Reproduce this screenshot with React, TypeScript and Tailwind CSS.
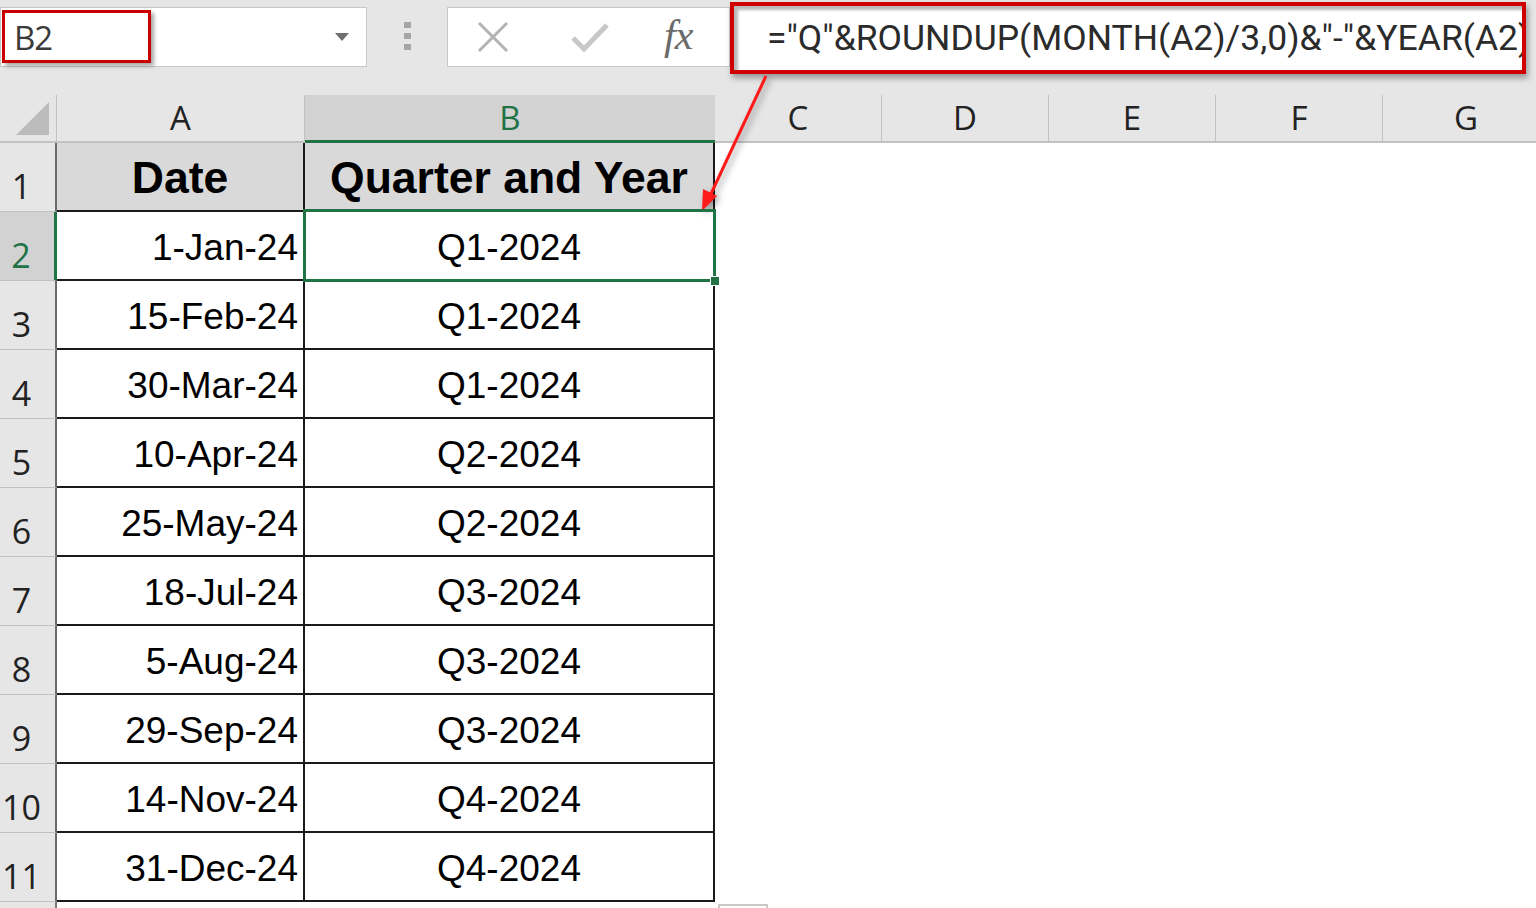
import React from "react";

const rows: [string, string][] = [
  ["1-Jan-24", "Q1-2024"],
  ["15-Feb-24", "Q1-2024"],
  ["30-Mar-24", "Q1-2024"],
  ["10-Apr-24", "Q2-2024"],
  ["25-May-24", "Q2-2024"],
  ["18-Jul-24", "Q3-2024"],
  ["5-Aug-24", "Q3-2024"],
  ["29-Sep-24", "Q3-2024"],
  ["14-Nov-24", "Q4-2024"],
  ["31-Dec-24", "Q4-2024"],
];

const otherCols = ["C", "D", "E", "F", "G"];

export default function App() {
  return (
    <div className="relative w-[1536px] h-[908px] overflow-hidden bg-white font-['Liberation_Sans',Arial,sans-serif]">
      <Toolbar />
      <ColumnHeaders />

      {/* row 1: headings */}
      <div className="flex h-[69px]">
        <RowNum n={1} />
        <div className="w-[248px] shrink-0 flex items-center justify-center bg-[#d9d9d9] border-r-2 border-b-2 border-[#1a1a1a] text-[44.5px] font-bold text-black pt-[3px]">
          Date
        </div>
        <div className="w-[410px] shrink-0 flex items-center justify-center bg-[#d9d9d9] border-r-2 border-b-2 border-[#1a1a1a] text-[44.5px] font-bold text-black pt-[3px]">
          Quarter and Year
        </div>
        <div className="flex-1" />
      </div>

      {rows.map(([d, q], i) => (
        <div key={i} className="flex h-[69px]">
          <RowNum n={i + 2} active={i === 0} />
          <div className="w-[248px] shrink-0 flex items-center justify-end pr-[5px] border-r-2 border-b-2 border-[#1a1a1a] text-[37px] text-black pt-[5px]">
            {d}
          </div>
          <div className="relative w-[410px] shrink-0 flex items-center justify-center border-r-2 border-b-2 border-[#1a1a1a] text-[37px] text-black pt-[5px]">
            {q}
            {i === 0 && (
              <div className="absolute z-10 -left-[2px] -top-[3px] -right-[3px] -bottom-[3px] border-[3px] border-[#217346]">
                <div className="absolute -right-[7px] -bottom-[7px] w-[10px] h-[10px] bg-[#217346] border border-white" />
              </div>
            )}
          </div>
          <div className="flex-1" />
        </div>
      ))}

      {/* partial row 12 */}
      <div className="flex h-[20px]">
        <div className="w-[57px] shrink-0 bg-[#e6e6e6] border-r-2 border-[#7a7a7a]" />
        <div className="w-[658px] shrink-0" />
        <div className="ml-[3px] mt-[2px] w-[50px] h-[10px] border-2 border-[#c8c8c8]" />
      </div>

      <Arrow />
    </div>
  );
}

function Toolbar() {
  return (
    <div className="flex h-[95px] bg-[#e6e6e6] items-start font-['Open_Sans',sans-serif]">
      <div className="relative mt-[7px] w-[367px] h-[60px] bg-white border border-[#c8c8c8] flex items-center justify-between">
        <span className="pl-[13px] text-[33px] leading-none text-[#3b3b3b] tracking-[-1px]">B2</span>
        <svg width="16" height="10" viewBox="0 0 16 10" className="mr-[16px]">
          <path d="M1 1 L15 1 L8 9 Z" fill="#6f6f6f" />
        </svg>
        <div className="absolute left-[1px] top-[2px] w-[149px] h-[53px] border-[3px] border-[#c80000] shadow-[3px_3px_4px_rgba(0,0,0,0.35)]" />
      </div>

      <div className="ml-[37px] mt-[22px] flex flex-col gap-[5px]">
        <div className="w-[7px] h-[6px] bg-[#a6a6a6]" />
        <div className="w-[7px] h-[6px] bg-[#a6a6a6]" />
        <div className="w-[7px] h-[6px] bg-[#a6a6a6]" />
      </div>

      <div className="ml-[36px] mt-[7px] w-[283px] h-[60px] bg-white border border-[#c8c8c8] flex items-center">
        <svg width="34" height="34" viewBox="0 0 34 34" className="ml-[28px]">
          <path d="M3 3 L31 31 M31 3 L3 31" stroke="#b3b3b3" strokeWidth="3" fill="none" />
        </svg>
        <svg width="40" height="32" viewBox="0 0 40 32" className="ml-[60px]">
          <path d="M3 17 L14 28 L37 4" stroke="#c8c8c8" strokeWidth="5" fill="none" />
        </svg>
        <span className="ml-[54px] font-['Liberation_Serif',serif] italic text-[42px] leading-none text-[#6a6a6a] -mt-[4px] tracking-[-1px]">
          fx
        </span>
      </div>

      <div className="mt-[2px] w-[796px] h-[72px] border-[4px] border-[#d10000] bg-white shadow-[inset_4px_4px_3px_rgba(0,0,0,0.28),2px_4px_6px_rgba(0,0,0,0.35)] flex items-center overflow-hidden">
        <span className="pl-[33px] pt-[2px] whitespace-nowrap text-[35.5px] leading-none text-[#2b2b2b] font-['Roboto',sans-serif]">
          ="Q"&amp;ROUNDUP(MONTH(A2)/3,0)&amp;"-"&amp;YEAR(A2)
        </span>
      </div>
    </div>
  );
}

function ColumnHeaders() {
  return (
    <div className="flex h-[48px] bg-[#e6e6e6] font-['Open_Sans',sans-serif] text-[33px] leading-none text-[#222]">
      <div className="w-[57px] shrink-0 border-r border-b-2 border-[#c2c2c2] flex items-end justify-end pr-[7px] pb-[6px]">
        <svg width="33" height="33" viewBox="0 0 33 33">
          <path d="M33 0 L33 33 L0 33 Z" fill="#bcbcbc" />
        </svg>
      </div>
      <div className="w-[248px] shrink-0 border-r border-b-2 border-[#c2c2c2] flex items-end justify-center pb-[7px]">A</div>
      <div className="w-[410px] shrink-0 bg-[#d2d2d2] border-b-[3px] border-[#217346] flex items-end justify-center pb-[6px] text-[#217346]">
        B
      </div>
      {otherCols.map((c) => (
        <div
          key={c}
          className="w-[167px] shrink-0 border-r border-b-2 border-[#c2c2c2] flex items-end justify-center pb-[7px]"
        >
          {c}
        </div>
      ))}
    </div>
  );
}

function RowNum({ n, active }: { n: number; active?: boolean }) {
  return (
    <div
      className={
        active
          ? "w-[57px] shrink-0 bg-[#d2d2d2] border-b border-[#c2c2c2] border-r-[3px] border-r-[#217346] flex items-end justify-center pr-[12px] pb-[8px] font-['Open_Sans',sans-serif] text-[34px] leading-none text-[#217346]"
          : "w-[57px] shrink-0 bg-[#e6e6e6] border-b border-[#c2c2c2] border-r-2 border-r-[#6a6a6a] flex items-end justify-center pr-[12px] pb-[8px] font-['Open_Sans',sans-serif] text-[34px] leading-none text-[#222]"
      }
    >
      {n}
    </div>
  );
}

function Arrow() {
  return (
    <svg
      className="absolute left-[690px] top-[70px] drop-shadow-[3px_3px_3px_rgba(0,0,0,0.35)]"
      width="90"
      height="150"
      viewBox="0 0 90 150"
    >
      <path d="M76 6 L20 126" stroke="#ff1a1a" strokeWidth="3" fill="none" />
      <path d="M12 141 L13 119 L27 126 Z" fill="#ff1a1a" />
    </svg>
  );
}
